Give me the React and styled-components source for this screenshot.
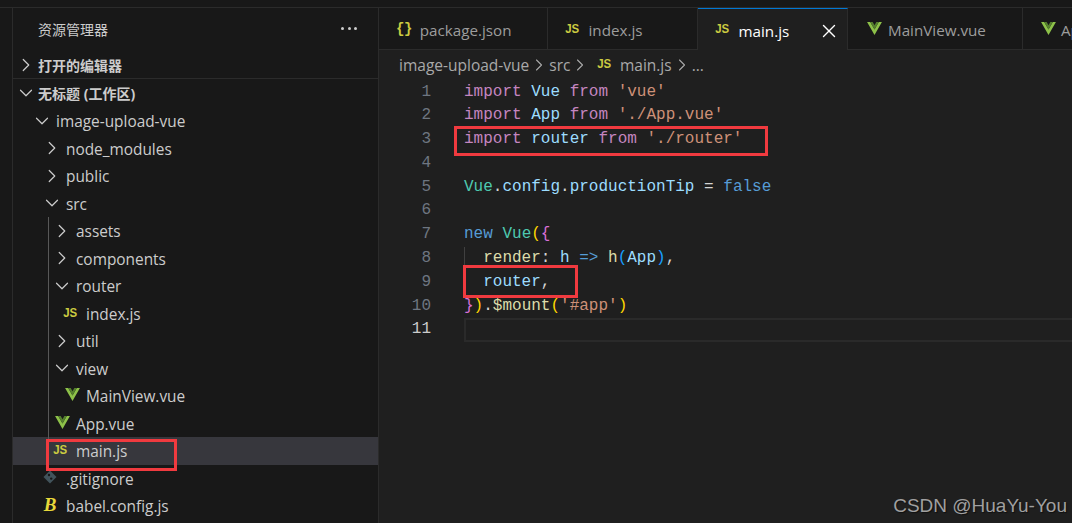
import React from 'react';
import styled, { createGlobalStyle } from 'styled-components';
import { ChevronRight, ChevronDown, X } from 'lucide-react';

const GlobalStyle = createGlobalStyle`
  html, body { margin: 0; padding: 0; background: #181818; }
  * { box-sizing: border-box; }
`;

const uiFont = `"Open Sans", "Noto Sans CJK SC", sans-serif`;

const Window = styled.div`
  position: relative;
  width: 1072px;
  height: 523px;
  overflow: hidden;
  background: #181818;
  font-family: ${uiFont};
  display: flex;
  flex-direction: column;
`;

const TopStrip = styled.div`
  height: 8px;
  flex: none;
  border-bottom: 1px solid #2b2b2b;
`;

const Body = styled.div`
  flex: 1;
  display: flex;
  min-height: 0;
`;

const Rail = styled.div`
  width: 13px;
  flex: none;
  border-right: 1px solid #2b2b2b;
`;

const Sidebar = styled.aside`
  width: 366px;
  flex: none;
  border-right: 1px solid #2b2b2b;
  overflow: hidden;
`;

const SidebarTitle = styled.div`
  height: 43px;
  padding: 0 21px 2px 25px;
  display: flex;
  align-items: center;
  justify-content: space-between;
  color: #cccccc;
  font-size: 14px;
`;

const Dots = styled.div`
  display: flex;
  gap: 3.5px;
  span {
    width: 3px;
    height: 3px;
    border-radius: 50%;
    background: #cccccc;
  }
`;

const Section = styled.div`
  height: 28px;
  padding-left: 2px;
  padding-top: ${p => (p.$line ? '1px' : '0')};
  display: flex;
  align-items: center;
  color: #cccccc;
  font-size: 14px;
  font-weight: 700;
  border-bottom: ${p => (p.$line ? '1px solid #2b2b2b' : 'none')};
  svg { flex: none; width: 22px; height: 22px; margin-right: 1px; stroke-width: 1.3; }
`;

const Row = styled.div`
  height: 27.5px;
  display: flex;
  align-items: center;
  padding-left: ${p => p.$indent}px;
  padding-top: 2px;
  color: #cccccc;
  font-size: 15.4px;
  background-color: ${p => (p.$selected ? '#37373d' : 'transparent')};
  background-image: ${p => (p.$guide ? 'linear-gradient(#585858, #585858)' : 'none')};
  background-repeat: no-repeat;
  background-position: 35px 0;
  background-size: 1px 100%;
  svg.chev { flex: none; width: 22px; height: 22px; margin: -2px 3px 0 0; stroke-width: 1.3; }
`;

const IconSlot = styled.span`
  flex: none;
  width: 20px;
  margin-right: ${p => p.$gap}px;
  display: flex;
  align-items: center;
  justify-content: center;
  margin-top: -4px;
`;

const JsGlyph = styled.span`
  display: inline-block;
  color: #cbcb41;
  font-family: "Liberation Sans", sans-serif;
  font-size: 13.5px;
  font-weight: 700;
  line-height: 1;
  transform: scaleX(0.85);
`;

const BraceGlyph = styled(JsGlyph)`
  font-family: "Liberation Mono", monospace;
  font-size: 14px;
  letter-spacing: -0.5px;
  transform: none;
`;

const BabelGlyph = styled.span`
  color: #e8d93a;
  font-family: "Liberation Serif", serif;
  font-style: italic;
  font-weight: 700;
  font-size: 19px;
  line-height: 1;
`;

const VueIcon = () => (
  <svg width="15" height="13" viewBox="0 0 16 14">
    <path d="M0 0h3.4L8 8 12.6 0H16L8 14z" fill="#8dc149" />
    <path d="M3.4 0h2.6L8 3.4 10 0h2.6L8 8z" fill="#55802e" />
  </svg>
);

const GitIcon = () => (
  <svg width="14" height="14" viewBox="0 0 14 14">
    <path d="M7 .5 13.5 7 7 13.5.5 7z" fill="#41535b" />
    <circle cx="6" cy="5" r="1.2" fill="#181818" />
    <circle cx="8.2" cy="8.6" r="1.2" fill="#181818" />
  </svg>
);

const Editor = styled.main`
  flex: 1;
  min-width: 0;
  background: #1f1f1f;
  display: flex;
  flex-direction: column;
`;

const TabBar = styled.div`
  height: 42px;
  flex: none;
  display: flex;
  background: #181818;
  border-bottom: 1px solid #2b2b2b;
`;

const Tab = styled.div`
  flex: none;
  width: ${p => p.$width}px;
  height: ${p => (p.$active ? '42px' : '41px')};
  padding-left: ${p => p.$pad}px;
  padding-top: ${p => (p.$active ? '2px' : '3px')};
  display: flex;
  align-items: center;
  gap: ${p => p.$gap}px;
  font-size: 15.2px;
  color: ${p => (p.$active ? '#ffffff' : '#9d9d9d')};
  background: ${p => (p.$active ? '#1f1f1f' : '#181818')};
  border-right: 1px solid #2b2b2b;
  border-top: ${p => (p.$active ? '1px solid #0078d4' : 'none')};
  ${IconSlot} { width: auto; margin: -3px 0 0; }
  svg.close { margin-left: auto; margin-right: 7px; color: #ffffff; stroke-width: 1.5; }
`;

const Crumbs = styled.div`
  height: 30.5px;
  flex: none;
  padding-left: 20px;
  display: flex;
  align-items: center;
  color: #a9a9a9;
  font-size: 15.5px;
  svg { width: 20px; height: 20px; stroke-width: 1.3; }
  ${IconSlot} { width: auto; margin: -3px 7px 0 6px; }
`;

const Code = styled.div`
  font-family: "Liberation Mono", monospace;
  font-size: 16px;
`;

const Line = styled.div`
  height: 23.8px;
  line-height: 23.8px;
  display: flex;
  white-space: pre;
`;

const Gutter = styled.span`
  flex: none;
  width: 52px;
  text-align: right;
  color: ${p => (p.$current ? '#cccccc' : '#6e7681')};
`;

const Content = styled.span`
  flex: 1;
  margin-left: 33px;
  height: 100%;
  border: ${p => (p.$current ? '2px solid #2a2a2a' : 'none')};
  border-right: none;
  box-shadow: ${p => (p.$guide ? 'inset 1px 0 0 #404040' : 'none')};
`;

const T = styled.span`
  color: ${p => p.$c};
`;

const RedBox = styled.div`
  position: absolute;
  left: ${p => p.$x}px;
  top: ${p => p.$y}px;
  width: ${p => p.$w}px;
  height: ${p => p.$h}px;
  border: 3px solid #f03a3f;
  pointer-events: none;
`;

const Watermark = styled.div`
  position: absolute;
  right: 5px;
  bottom: 6px;
  color: #a0a0a0;
  font-family: "Liberation Sans", sans-serif;
  font-size: 19px;
  text-shadow: 1px 1px 1px rgba(0, 0, 0, 0.5);
`;

const kw = '#c586c0';
const vr = '#9cdcfe';
const st = '#ce9178';
const pl = '#d4d4d4';
const fn = '#dcdcaa';
const bl = '#569cd6';
const ty = '#4ec9b0';
const gold = '#ffd700';
const pink = '#da70d6';
const azure = '#179fff';

const code = [
  [[kw, 'import'], [pl, ' '], [vr, 'Vue'], [pl, ' '], [kw, 'from'], [pl, ' '], [st, "'vue'"]],
  [[kw, 'import'], [pl, ' '], [vr, 'App'], [pl, ' '], [kw, 'from'], [pl, ' '], [st, "'./App.vue'"]],
  [[kw, 'import'], [pl, ' '], [vr, 'router'], [pl, ' '], [kw, 'from'], [pl, ' '], [st, "'./router'"]],
  [],
  [[ty, 'Vue'], [pl, '.'], [vr, 'config'], [pl, '.'], [vr, 'productionTip'], [pl, ' = '], [bl, 'false']],
  [],
  [[bl, 'new'], [pl, ' '], [ty, 'Vue'], [gold, '('], [pink, '{']],
  [[pl, '  '], [fn, 'render'], [pl, ': '], [vr, 'h'], [pl, ' '], [bl, '=>'], [pl, ' '], [fn, 'h'], [azure, '('], [vr, 'App'], [azure, ')'], [pl, ',']],
  [[pl, '  '], [vr, 'router'], [pl, ',']],
  [[pink, '}'], [gold, ')'], [pl, '.'], [fn, '$mount'], [gold, '('], [st, "'#app'"], [gold, ')']],
  [],
];

const tree = [
  { name: 'image-upload-vue', indent: 18, open: true },
  { name: 'node_modules', indent: 28, open: false },
  { name: 'public', indent: 28, open: false },
  { name: 'src', indent: 28, open: true },
  { name: 'assets', indent: 38, open: false, guide: true },
  { name: 'components', indent: 38, open: false, guide: true },
  { name: 'router', indent: 38, open: true, guide: true },
  { name: 'index.js', indent: 47, gap: 6, icon: <JsGlyph>JS</JsGlyph>, guide: true },
  { name: 'util', indent: 38, open: false, guide: true },
  { name: 'view', indent: 38, open: true, guide: true },
  { name: 'MainView.vue', indent: 49, gap: 4, icon: <VueIcon />, guide: true },
  { name: 'App.vue', indent: 39, gap: 4, icon: <VueIcon />, guide: true },
  { name: 'main.js', indent: 37, gap: 6, icon: <JsGlyph>JS</JsGlyph>, guide: true, selected: true },
  { name: '.gitignore', indent: 27, gap: 6, icon: <GitIcon /> },
  { name: 'babel.config.js', indent: 27, gap: 6, icon: <BabelGlyph>B</BabelGlyph> },
];

const tabs = [
  { name: 'package.json', width: 169, pad: 17, gap: 8, icon: <BraceGlyph>{'{}'}</BraceGlyph> },
  { name: 'index.js', width: 150, pad: 16, gap: 8, icon: <JsGlyph>JS</JsGlyph> },
  { name: 'main.js', width: 150, pad: 16, gap: 8, icon: <JsGlyph>JS</JsGlyph>, active: true },
  { name: 'MainView.vue', width: 175, pad: 19, gap: 6, icon: <VueIcon /> },
  { name: 'App.vue', width: 120, pad: 18, gap: 5, icon: <VueIcon /> },
];

export default function App() {
  return (
    <Window>
      <GlobalStyle />
      <TopStrip />
      <Body>
        <Rail />
        <Sidebar>
          <SidebarTitle>
            资源管理器
            <Dots><span /><span /><span /></Dots>
          </SidebarTitle>
          <Section $line><ChevronRight />打开的编辑器</Section>
          <Section><ChevronDown />无标题 (工作区)</Section>
          {tree.map(item => (
            <Row key={item.name} $indent={item.indent} $guide={item.guide} $selected={item.selected}>
              {item.icon ? (
                <IconSlot $gap={item.gap}>{item.icon}</IconSlot>
              ) : item.open ? (
                <ChevronDown className="chev" />
              ) : (
                <ChevronRight className="chev" />
              )}
              {item.name}
            </Row>
          ))}
        </Sidebar>
        <Editor>
          <TabBar>
            {tabs.map(tab => (
              <Tab key={tab.name} $width={tab.width} $pad={tab.pad} $gap={tab.gap} $active={tab.active}>
                <IconSlot>{tab.icon}</IconSlot>
                {tab.name}
                {tab.active && <X className="close" size={22} />}
              </Tab>
            ))}
          </TabBar>
          <Crumbs>
            image-upload-vue
            <ChevronRight />
            src
            <ChevronRight />
            <IconSlot><JsGlyph>JS</JsGlyph></IconSlot>
            main.js
            <ChevronRight />
            ...
          </Crumbs>
          <Code>
            {code.map((tokens, i) => (
              <Line key={i}>
                <Gutter $current={i === 10}>{i + 1}</Gutter>
                <Content $current={i === 10} $guide={i === 7 || i === 8}>
                  {tokens.map(([color, text], j) => (
                    <T key={j} $c={color}>{text}</T>
                  ))}
                </Content>
              </Line>
            ))}
          </Code>
        </Editor>
      </Body>
      <RedBox $x={46} $y={439} $w={131} $h={32} />
      <RedBox $x={454} $y={126} $w={314} $h={30} />
      <RedBox $x={463} $y={265} $w={115} $h={33} />
      <Watermark>CSDN @HuaYu-You</Watermark>
    </Window>
  );
}
